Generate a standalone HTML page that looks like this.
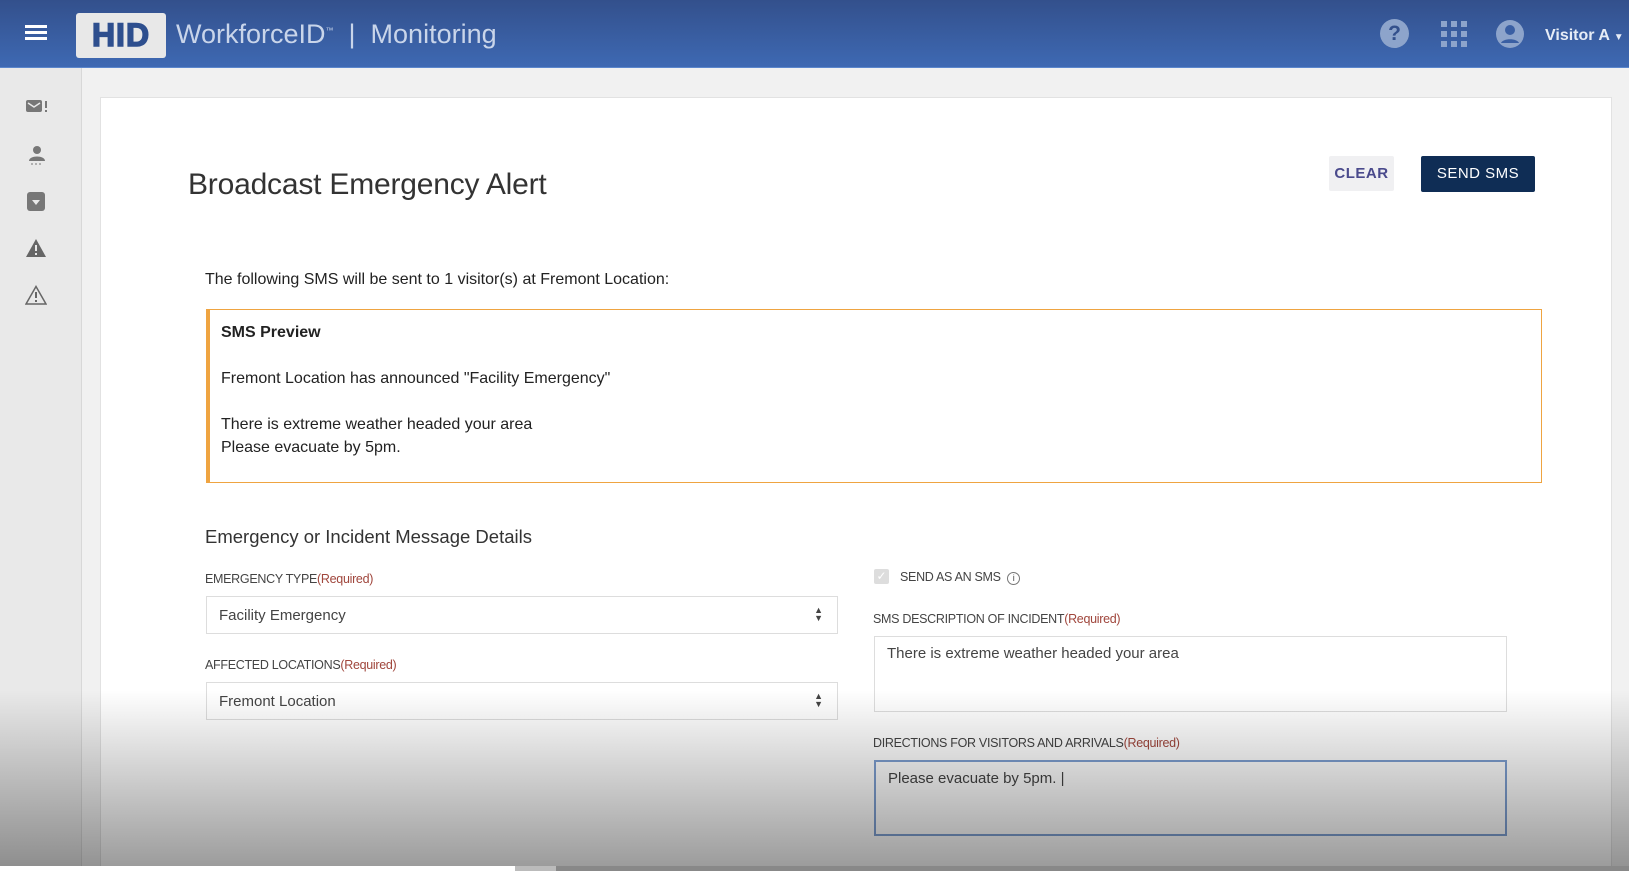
<!DOCTYPE html>
<html><head><meta charset="utf-8"><style>
*{box-sizing:border-box;margin:0;padding:0}
html,body{width:1629px;height:871px;overflow:hidden}
body{background:#f1f1f1;font-family:"Liberation Sans",sans-serif;color:#222;position:relative}
.hdr{position:absolute;left:0;top:0;width:1629px;height:68px;background:linear-gradient(#33508c,#3e69b3);border-bottom:1px solid #5b86cc}
.side{position:absolute;left:0;top:68px;width:82px;height:803px;background:#e9e9e9;border-right:1px solid #d8d8d8}
.card{position:absolute;left:100px;top:97px;width:1512px;height:770px;background:#fff;border:1px solid #e2e2e2}
.a{position:absolute;white-space:nowrap}
.lbl{font-size:12.5px;color:#444;letter-spacing:-0.3px}
.req{color:#a0463c}
.box{position:absolute;border:1px solid #ddd;background:#fff;font-size:15px;color:#444}
.ov{position:absolute;left:0;top:690px;width:1629px;height:181px;background:linear-gradient(rgba(0,0,0,0),rgba(0,0,0,0.4));}
</style></head><body>
<div class="hdr">
 <div class="a" style="left:25px;top:25px;width:22px;height:3px;background:#fff;box-shadow:0 6px 0 #fff,0 12px 0 #fff"></div>
 <div class="a" style="left:76px;top:13px;width:90px;height:45px;background:#e8e8e8;border-radius:3px;font:900 32px 'Liberation Sans',sans-serif;color:#2e4f8e;text-align:center;line-height:45px;letter-spacing:1px;-webkit-text-stroke:1.5px #2e4f8e">HID</div>
 <div class="a" style="left:176px;top:14px;font-size:27px;color:#c9d5ea;line-height:34px">WorkforceID<sup style="font-size:8px">™</sup> &nbsp;| &nbsp;Monitoring</div>
 <div class="a" style="left:1380px;top:19px;width:29px;height:29px;border-radius:50%;background:#8da4cb;color:#33508c;font:bold 21px/29px 'Liberation Sans';text-align:center">?</div>
 <svg class="a" style="left:1441px;top:21px" width="26" height="26"><g fill="#8da4cb"><rect x="0" y="0" width="6" height="6"/><rect x="10" y="0" width="6" height="6"/><rect x="20" y="0" width="6" height="6"/><rect x="0" y="10" width="6" height="6"/><rect x="10" y="10" width="6" height="6"/><rect x="20" y="10" width="6" height="6"/><rect x="0" y="20" width="6" height="6"/><rect x="10" y="20" width="6" height="6"/><rect x="20" y="20" width="6" height="6"/></g></svg>
 <svg class="a" style="left:1495px;top:19px" width="30" height="30"><circle cx="15" cy="15" r="14" fill="#8da4cb"/><circle cx="15" cy="11" r="5" fill="#3a5fa3"/><path d="M6 24c2-5 16-5 18 0" fill="#3a5fa3"/></svg>
 <div class="a" style="left:1545px;top:27px;font:bold 16px 'Liberation Sans';color:#e6ecf6">Visitor A <span style="font-size:10px">▼</span></div>
</div>
<div class="side">
 <svg class="a" style="left:26px;top:31px" width="22" height="16"><rect x="0" y="1" width="16" height="12" rx="2" fill="#777"/><path d="M2 4l6 4 6-4" stroke="#e9e9e9" stroke-width="1.5" fill="none"/><rect x="19" y="2" width="2" height="7" fill="#777"/><rect x="19" y="11" width="2" height="2" fill="#777"/></svg>
 <svg class="a" style="left:28px;top:77px" width="18" height="22"><circle cx="9" cy="5" r="4" fill="#777"/><path d="M1 16c0-6 16-6 16 0z" fill="#777"/><path d="M3 19h12" stroke="#777" stroke-dasharray="2 2"/></svg>
 <svg class="a" style="left:27px;top:124px" width="18" height="19"><rect width="18" height="19" rx="3" fill="#777"/><path d="M5 8h8l-4 5z" fill="#e9e9e9"/></svg>
 <svg class="a" style="left:25px;top:170px" width="22" height="20"><path d="M11 1L21 19H1z" fill="#666"/><rect x="10" y="7" width="2" height="6" fill="#e9e9e9"/><rect x="10" y="15" width="2" height="2" fill="#e9e9e9"/></svg>
 <svg class="a" style="left:25px;top:217px" width="22" height="20"><path d="M11 1.5L21 19H1z" fill="none" stroke="#666" stroke-width="1.5"/><rect x="10" y="7" width="2" height="6" fill="#666"/><rect x="10" y="15" width="2" height="2" fill="#666"/></svg>
</div>
<div class="card"></div>
<div class="a" style="left:188px;top:168px;font-size:30px;font-weight:300;color:#333;letter-spacing:-0.2px">Broadcast Emergency Alert</div>
<div class="a" style="left:1329px;top:156px;width:65px;height:35px;background:#f0f0f2;border-radius:2px;color:#4a4a8c;font:bold 15px/35px 'Liberation Sans';text-align:center;letter-spacing:0.5px">CLEAR</div>
<div class="a" style="left:1421px;top:156px;width:114px;height:36px;background:#0f2d55;border-radius:2px;color:#fff;font:15px/36px 'Liberation Sans';text-align:center;letter-spacing:0.5px">SEND SMS</div>
<div class="a" style="left:205px;top:271px;font-size:16px;color:#222">The following SMS will be sent to 1 visitor(s) at Fremont Location:</div>
<div class="a" style="left:206px;top:309px;width:1336px;height:174px;border:1px solid #efa441;border-left:4px solid #efa441"></div>
<div class="a" style="left:221px;top:324px;font-size:16px;font-weight:bold">SMS Preview</div>
<div class="a" style="left:221px;top:370px;font-size:16px">Fremont Location has announced "Facility Emergency"</div>
<div class="a" style="left:221px;top:416px;font-size:16px">There is extreme weather headed your area</div>
<div class="a" style="left:221px;top:439px;font-size:16px">Please evacuate by 5pm.</div>
<div class="a" style="left:205px;top:526px;font-size:18.5px;color:#333">Emergency or Incident Message Details</div>
<div class="a lbl" style="left:205px;top:572px">EMERGENCY TYPE<span class="req">(Required)</span></div>
<div class="box" style="left:206px;top:596px;width:632px;height:38px;padding:10px 12px">Facility Emergency<span style="position:absolute;right:14px;top:9px;font-size:9px;line-height:8px">▲<br>▼</span></div>
<div class="a lbl" style="left:205px;top:658px">AFFECTED LOCATIONS<span class="req">(Required)</span></div>
<div class="box" style="left:206px;top:682px;width:632px;height:38px;padding:10px 12px">Fremont Location<span style="position:absolute;right:14px;top:9px;font-size:9px;line-height:8px">▲<br>▼</span></div>
<div class="a" style="left:874px;top:569px;width:15px;height:15px;background:#ddd;border-radius:2px;color:#fff;font-size:12px;text-align:center;line-height:15px">✓</div>
<div class="a lbl" style="left:900px;top:570px">SEND AS AN SMS &nbsp;<span style="display:inline-block;width:13px;height:13px;border:1px solid #777;border-radius:50%;font-size:9px;text-align:center;line-height:11px">i</span></div>
<div class="a lbl" style="left:873px;top:612px">SMS DESCRIPTION OF INCIDENT<span class="req">(Required)</span></div>
<div class="box" style="left:874px;top:636px;width:633px;height:76px;padding:8px 12px">There is extreme weather headed your area</div>
<div class="a lbl" style="left:873px;top:736px">DIRECTIONS FOR VISITORS AND ARRIVALS<span class="req">(Required)</span></div>
<div class="box" style="left:874px;top:760px;width:633px;height:76px;padding:8px 12px;border:2px solid #7fa0d2">Please evacuate by 5pm. |</div>
<div class="ov"></div>
<div class="a" style="left:0;top:866px;width:1629px;height:5px;background:#888"></div>
<div class="a" style="left:0;top:866px;width:556px;height:5px;background:#bbb"></div>
<div class="a" style="left:0;top:866px;width:515px;height:5px;background:#fff"></div>
</body></html>
